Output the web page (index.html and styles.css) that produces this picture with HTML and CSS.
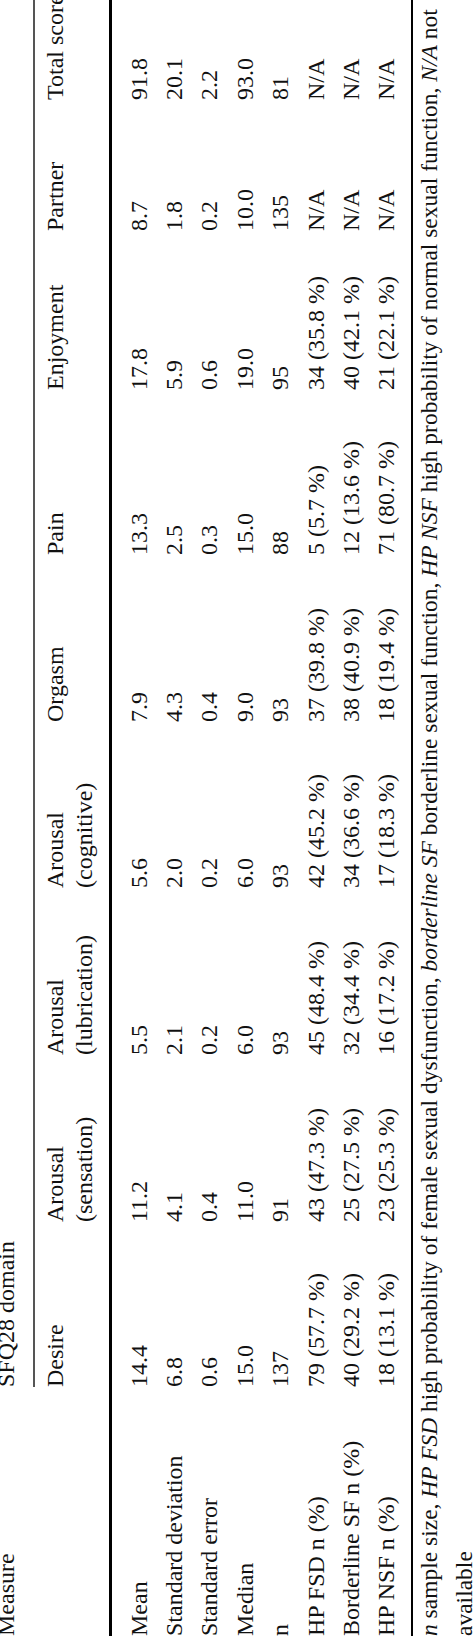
FILE: index.html
```html
<!DOCTYPE html>
<html lang="en">
<head>
<meta charset="utf-8">
<title>SFQ28 domain scores</title>
<link rel="stylesheet" href="styles.css">
</head>
<body>
<div class="page">
  <div class="sheet">
    <table class="sfq">
      <colgroup>
        <col class="c-measure">
        <col class="c-desire">
        <col class="c-sens">
        <col class="c-lub">
        <col class="c-cog">
        <col class="c-orgasm">
        <col class="c-pain">
        <col class="c-enjoy">
        <col class="c-partner">
        <col class="c-total">
      </colgroup>
      <thead>
        <tr class="h1">
          <th rowspan="2" class="measure">Measure</th>
          <th colspan="9" class="domain">SFQ28 domain</th>
        </tr>
        <tr class="h2">
          <th>Desire</th>
          <th>Arousal<br>(sensation)</th>
          <th>Arousal<br>(lubrication)</th>
          <th>Arousal<br>(cognitive)</th>
          <th>Orgasm</th>
          <th>Pain</th>
          <th>Enjoyment</th>
          <th>Partner</th>
          <th>Total score</th>
        </tr>
      </thead>
      <tbody>
        <tr><td>Mean</td><td>14.4</td><td>11.2</td><td>5.5</td><td>5.6</td><td>7.9</td><td>13.3</td><td>17.8</td><td>8.7</td><td>91.8</td></tr>
        <tr><td>Standard deviation</td><td>6.8</td><td>4.1</td><td>2.1</td><td>2.0</td><td>4.3</td><td>2.5</td><td>5.9</td><td>1.8</td><td>20.1</td></tr>
        <tr><td>Standard error</td><td>0.6</td><td>0.4</td><td>0.2</td><td>0.2</td><td>0.4</td><td>0.3</td><td>0.6</td><td>0.2</td><td>2.2</td></tr>
        <tr><td>Median</td><td>15.0</td><td>11.0</td><td>6.0</td><td>6.0</td><td>9.0</td><td>15.0</td><td>19.0</td><td>10.0</td><td>93.0</td></tr>
        <tr><td>n</td><td>137</td><td>91</td><td>93</td><td>93</td><td>93</td><td>88</td><td>95</td><td>135</td><td>81</td></tr>
        <tr><td>HP FSD n (%)</td><td>79 (57.7 %)</td><td>43 (47.3 %)</td><td>45 (48.4 %)</td><td>42 (45.2 %)</td><td>37 (39.8 %)</td><td>5 (5.7 %)</td><td>34 (35.8 %)</td><td>N/A</td><td>N/A</td></tr>
        <tr><td>Borderline SF n (%)</td><td>40 (29.2 %)</td><td>25 (27.5 %)</td><td>32 (34.4 %)</td><td>34 (36.6 %)</td><td>38 (40.9 %)</td><td>12 (13.6 %)</td><td>40 (42.1 %)</td><td>N/A</td><td>N/A</td></tr>
        <tr><td>HP NSF n (%)</td><td>18 (13.1 %)</td><td>23 (25.3 %)</td><td>16 (17.2 %)</td><td>17 (18.3 %)</td><td>18 (19.4 %)</td><td>71 (80.7 %)</td><td>21 (22.1 %)</td><td>N/A</td><td>N/A</td></tr>
      </tbody>
    </table>
    <p class="note"><i>n</i> sample size, <i>HP FSD</i> high probability of female sexual dysfunction, <i>borderline SF</i> borderline sexual function, <i>HP NSF</i> high probability of normal sexual function, <i>N/A</i> not<br>available</p>
  </div>
</div>
</body>
</html>
```

FILE: styles.css
```css
html, body {
  margin: 0;
  padding: 0;
  background: #fff;
}

body {
  width: 474px;
  height: 1636px;
  overflow: hidden;
}

.page {
  width: 474px;
  height: 1636px;
  overflow: hidden;
}

/* the table is printed sideways: laid out normally, then turned a quarter turn */
.sheet {
  width: 1636px;
  height: 474px;
  overflow: hidden;
  transform-origin: 0 0;
  transform: translateY(1636px) rotate(-90deg);
  font-family: "Liberation Serif", "Times New Roman", serif;
  font-size: 24px;
  color: #111;
}

.sfq {
  width: 1636px;
  table-layout: fixed;
  border-collapse: separate;
  border-spacing: 0;
  margin-top: -8px;
}

.c-measure { width: 249px; }
.c-desire  { width: 165px; }
.c-sens    { width: 167px; }
.c-lub     { width: 167px; }
.c-cog     { width: 166px; }
.c-orgasm  { width: 167px; }
.c-pain    { width: 165px; }
.c-enjoy   { width: 159px; }
.c-partner { width: 131px; }
.c-total   { width: 100px; }

.sfq th,
.sfq td {
  padding: 0;
  text-align: left;
  font-weight: normal;
  vertical-align: top;
  white-space: nowrap;
}

.sfq thead th {
  line-height: 29px;
}

.h1 .domain {
  padding-bottom: 11.5px;
  border-bottom: 2px solid #555;
}

.h2 th {
  padding-top: 6px;
  padding-bottom: 10px;
  border-bottom: 3px solid #000;
}

.measure {
  border-bottom: 3px solid #000;
}

.sfq td {
  line-height: 35.4px;
  height: 35.4px;
}

.sfq tbody tr:first-child td {
  padding-top: 10px;
}

.sfq tbody tr:last-child td {
  padding-bottom: 6.3px;
  border-bottom: 2px solid #000;
}

.note {
  margin: -1.5px 0 0;
  font-size: 23.5px;
  line-height: 35px;
  white-space: nowrap;
}
```
